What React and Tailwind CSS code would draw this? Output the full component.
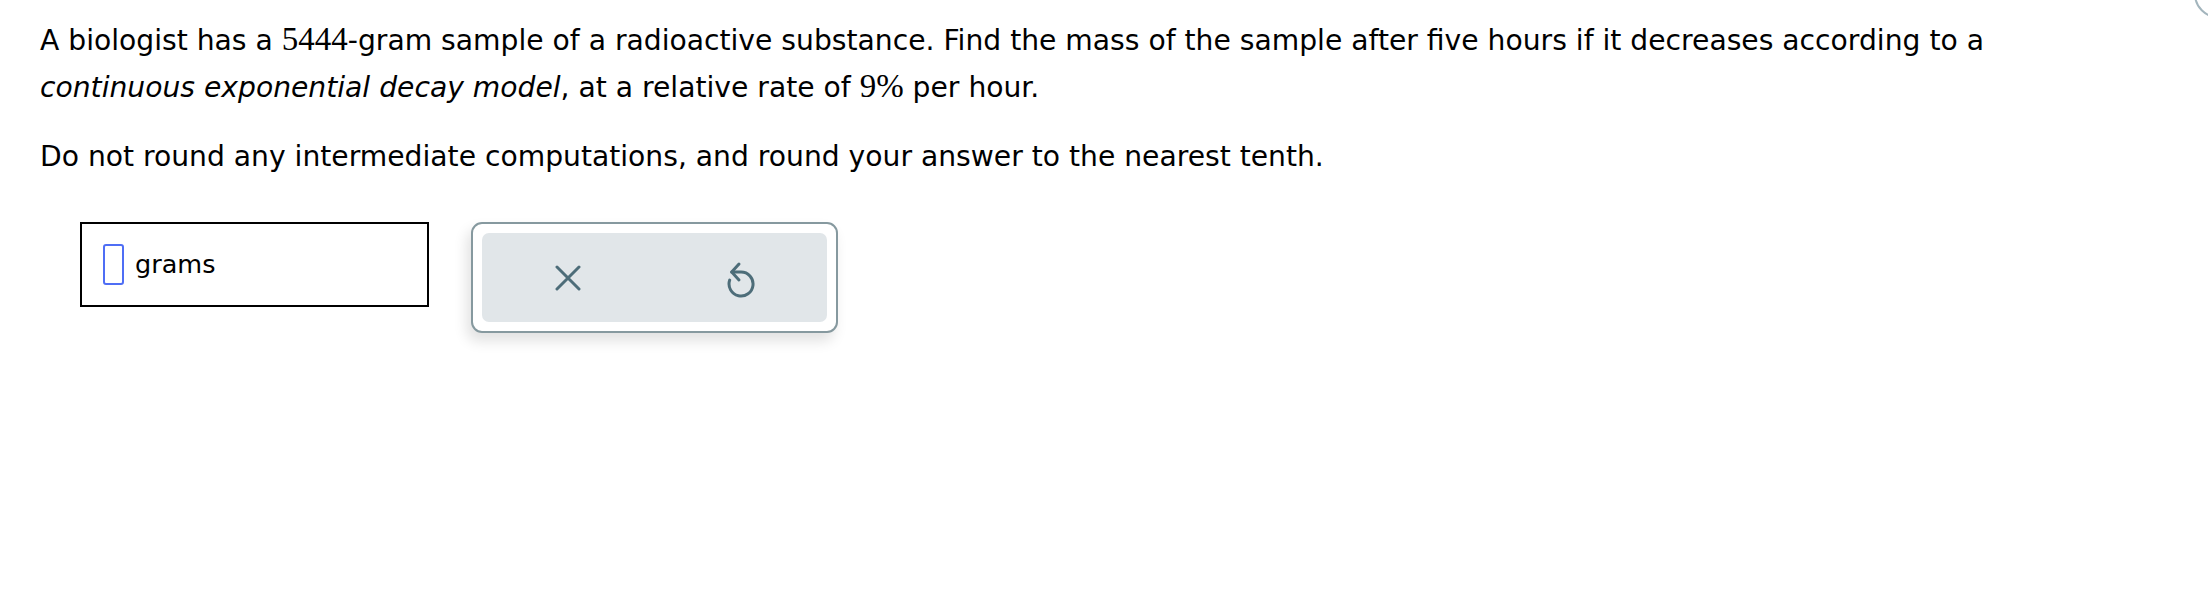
import React from 'react';

const mathFont = { fontFamily: '"Liberation Serif", "DejaVu Serif", serif' };

const CloseIcon = () => (
    <svg width="26" height="26" viewBox="0 0 26 26" fill="none" stroke="#4d6d79" strokeWidth="3" strokeLinecap="round">
        <path d="M2 2 L24 24 M24 2 L2 24" />
    </svg>
);

const UndoIcon = () => (
    <svg width="40" height="40" viewBox="0 0 40 40" fill="none" stroke="#4d6d79" strokeWidth="3" strokeLinecap="round" strokeLinejoin="round">
        <path d="M10.7 14 H20 A12 12 0 1 1 8.7 22.1" />
        <path d="M18 6 L10.7 14 L18 22" />
    </svg>
);

const App = () => {
    return (
        <div className="relative w-full min-h-[614px] overflow-hidden bg-white text-black" style={{ fontFamily: '"DejaVu Sans", Verdana, sans-serif' }}>
            <div className="absolute right-[-34px] top-[-30px] w-[48px] h-[48px] rounded-full border-2 border-[#a3b5bd]" />

            <div className="pl-[40px] pt-[17px] max-w-[2050px] text-[28.2px] leading-[47px]">
                <p>
                    A biologist has a <span className="text-[33px] leading-none" style={mathFont}>5444</span>-gram sample of a radioactive substance. Find the mass of the sample after five hours if it decreases according to a{' '}
                    <i>continuous exponential decay model</i>, at a relative rate of <span className="text-[33px] leading-none" style={mathFont}>9%</span> per hour.
                </p>
                <p className="mt-[22px]">Do not round any intermediate computations, and round your answer to the nearest tenth.</p>
            </div>

            <div className="flex items-start gap-[42px] pl-[80px] mt-[42px]">
                <div className="w-[349px] h-[85px] border-2 border-black flex items-center pl-[21px] gap-[11px]">
                    <div className="w-[21px] h-[41px] border-2 border-[#4f6ef5] rounded-[3px]" />
                    <span className="text-[25.5px] leading-none mt-[1px]">grams</span>
                </div>

                <div className="w-[367px] h-[111px] rounded-[11px] border-2 border-[#86999f] bg-white p-[9px] shadow-[-4px_8px_14px_rgba(0,0,0,0.12)]">
                    <div className="flex h-full rounded-[7px] bg-[#e1e6e9]">
                        <button className="flex-1 flex items-center justify-center">
                            <CloseIcon />
                        </button>
                        <button className="flex-1 flex items-center justify-center">
                            <UndoIcon />
                        </button>
                    </div>
                </div>
            </div>
        </div>
    );
};

export default App;
